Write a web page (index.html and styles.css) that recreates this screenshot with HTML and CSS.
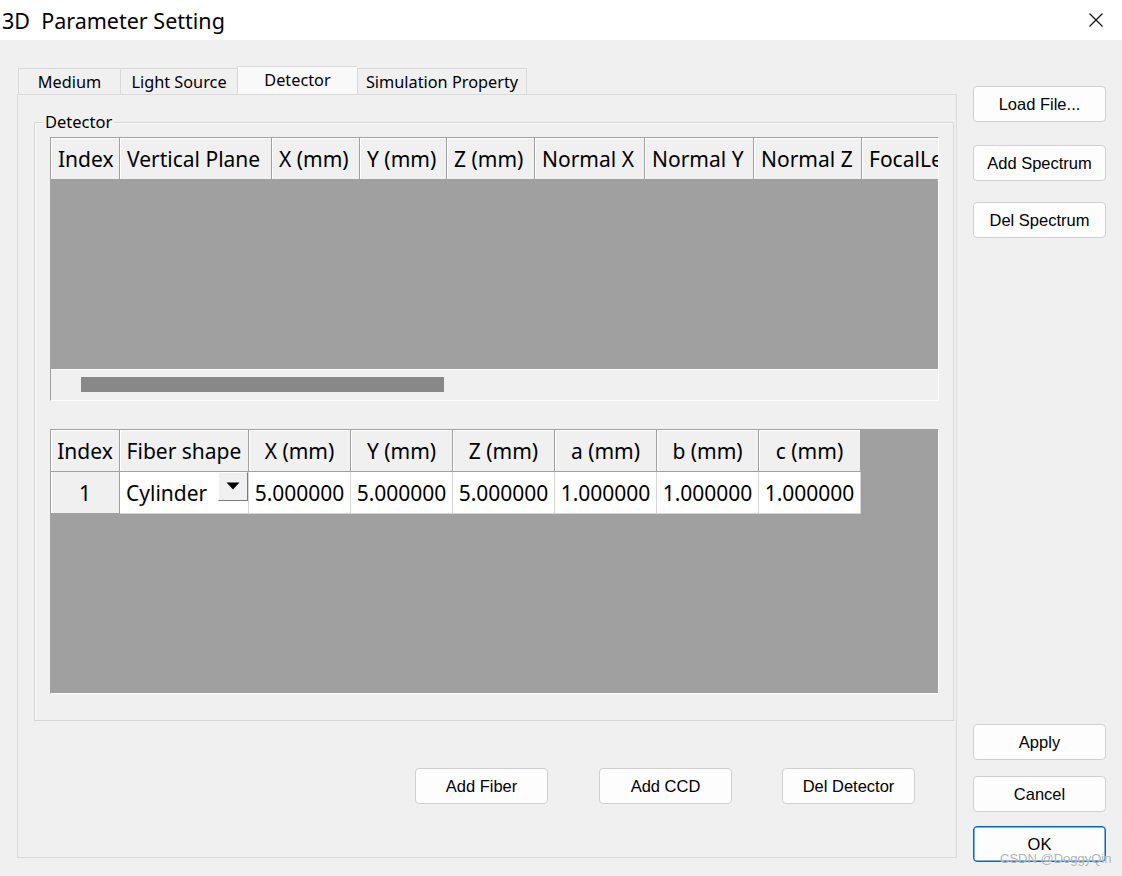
FILE: index.html
```html
<!DOCTYPE html>
<html>
<head>
<meta charset="utf-8">
<link rel="stylesheet" href="styles.css">
</head>
<body>
<div class="titlebar">
  <span class="title">3D&nbsp; Parameter Setting</span>
  <svg class="close" width="16" height="16" viewBox="0 0 16 16"><path d="M1.5 1.5 L14.5 14.5 M14.5 1.5 L1.5 14.5" stroke="#1a1a1a" stroke-width="1.3" fill="none"/></svg>
</div>
<div class="main">
  <div class="tabwidget">
    <div class="tabs">
      <div class="tab w-medium">Medium</div>
      <div class="tab w-light">Light Source</div>
      <div class="tab active w-det">Detector</div>
      <div class="tab w-sim">Simulation Property</div>
    </div>
    <div class="pane">
      <div class="group">
        <div class="group-title">Detector</div>
        <div class="grid grid1">
          <div class="hrow">
            <div class="hc l c-idx">Index</div>
            <div class="hc l c-vp">Vertical Plane</div>
            <div class="hc l c-x">X (mm)</div>
            <div class="hc l c-y">Y (mm)</div>
            <div class="hc l c-z">Z (mm)</div>
            <div class="hc l c-nx">Normal X</div>
            <div class="hc l c-ny">Normal Y</div>
            <div class="hc l c-nz">Normal Z</div>
            <div class="hc l c-fl">FocalLength</div>
          </div>
          <div class="gbody"></div>
          <div class="hscroll"><div class="handle"></div></div>
        </div>
        <div class="grid grid2">
          <div class="hrow">
            <div class="hc c-idx">Index</div>
            <div class="hc c-fs">Fiber shape</div>
            <div class="hc c-v">X (mm)</div>
            <div class="hc c-v">Y (mm)</div>
            <div class="hc c-v">Z (mm)</div>
            <div class="hc c-v">a (mm)</div>
            <div class="hc c-v">b (mm)</div>
            <div class="hc c-v">c (mm)</div>
          </div>
          <div class="drow">
            <div class="rh c-idx">1</div>
            <div class="dc c-fs combo"><span>Cylinder</span><span class="drop"><svg width="14" height="8" viewBox="0 0 14 8"><path d="M0.5 0.5 H13.5 L7 7.5 Z" fill="#000"/></svg></span></div>
            <div class="dc c-v">5.000000</div>
            <div class="dc c-v">5.000000</div>
            <div class="dc c-v">5.000000</div>
            <div class="dc c-v">1.000000</div>
            <div class="dc c-v">1.000000</div>
            <div class="dc c-v">1.000000</div>
          </div>
        </div>
      </div>
      <div class="actions">
        <button class="btn">Add Fiber</button>
        <button class="btn">Add CCD</button>
        <button class="btn">Del Detector</button>
      </div>
    </div>
  </div>
  <div class="side">
    <button class="btn">Load File...</button>
    <button class="btn s2">Add Spectrum</button>
    <button class="btn s3">Del Spectrum</button>
    <button class="btn s4">Apply</button>
    <button class="btn s5">Cancel</button>
    <button class="btn s6 default">OK</button>
  </div>
</div>
<div class="watermark">CSDN @DoggyQin</div>
</body>
</html>
```
FILE: styles.css
```css
* { box-sizing: border-box; margin: 0; padding: 0; }
html, body { width: 1122px; height: 876px; overflow: hidden; }
body {
  background: #f0f0f0;
  font-family: "Noto Sans", "Open Sans", sans-serif;
  color: #000;
  position: relative;
}
.titlebar {
  height: 40px;
  background: #fff;
  display: flex;
  align-items: center;
  justify-content: space-between;
}
.title { font-size: 21.5px; padding-left: 2px; }
.close { margin-right: 18px; margin-top: -1px; }

.main { display: flex; height: 836px; }

.tabwidget {
  margin-left: 17px;
  margin-top: 26px;
  width: 940px;
  display: flex;
  flex-direction: column;
}
.tabs { display: flex; align-items: flex-end; height: 28px; padding-left: 1px; }
.tab {
  height: 26px;
  border: 1px solid #dadada;
  border-bottom: none;
  border-right: none;
  font-size: 16.3px;
  display: flex;
  align-items: center;
  justify-content: center;
  background: #f0f0f0;
}
.tab:last-child { border-right: 1px solid #dadada; }
.tab.active { height: 28px; background: #f9f9f9; padding-bottom: 2px; }
.w-medium { width: 102px; }
.w-light { width: 117px; }
.w-det { width: 120px; }
.w-sim { width: 170px; }

.pane {
  height: 764px;
  border: 1px solid #dadada;
  background: #f0f0f0;
  display: flex;
  flex-direction: column;
}
.group {
  position: relative;
  margin-left: 16px;
  margin-top: 27px;
  width: 920px;
  height: 599px;
  border: 1px solid #d6d6d6;
  box-shadow: inset 1px 1px 0 #fbfbfb;
  padding: 14px 0 0 15px;
}
.group-title {
  position: absolute;
  top: -11px;
  left: 8px;
  padding: 0 2px;
  font-size: 16.5px;
  line-height: 20px;
  background: #f0f0f0;
}

.grid {
  width: 889px;
  border-top: 1px solid #a0a0a0;
  border-left: 1px solid #a0a0a0;
  border-right: 1px solid #fdfdfd;
  border-bottom: 1px solid #fdfdfd;
  background: #a0a0a0;
  display: flex;
  flex-direction: column;
  overflow: hidden;
}
.grid1 { height: 264px; }
.grid2 { height: 265px; margin-top: 28px; }

.hrow { display: flex; height: 42px; flex-shrink: 0; }
.hc {
  flex-shrink: 0;
  height: 42px;
  background: #f0f0f0;
  border-right: 1px solid #a0a0a0;
  border-bottom: 1px solid #a0a0a0;
  box-shadow: inset 1px 1px 0 #fff;
  font-size: 21px;
  line-height: 43px;
  white-space: nowrap;
  overflow: hidden;
  text-align: center;
}
.hc.l { text-align: left; padding-left: 7px; }
.grid1 .c-idx { width: 69px; }
.c-vp { width: 152px; }
.c-x { width: 88px; }
.c-y { width: 87px; }
.c-z { width: 88px; }
.c-nx { width: 110px; }
.c-ny { width: 109px; }
.c-nz { width: 108px; }
.c-fl { width: 140px; border-right: none; }

.gbody { flex: 1; background: #a0a0a0; }
.hscroll {
  height: 31px;
  flex-shrink: 0;
  background: #f0f0f0;
  border-top: 1px solid #fafafa;
  padding: 7px 0 0 30px;
}
.handle { width: 363px; height: 15px; background: #888; }

.grid2 .c-idx { width: 69px; }
.c-fs { width: 129px; }
.c-v { width: 102px; }
.drow { display: flex; height: 42px; flex-shrink: 0; }
.rh {
  flex-shrink: 0;
  background: #f0f0f0;
  border-right: 1px solid #a0a0a0;
  border-bottom: 1px solid #a0a0a0;
  box-shadow: inset 1px 0 0 #fff;
  font-size: 21px;
  line-height: 43px;
  text-align: center;
}
.dc {
  flex-shrink: 0;
  background: #fff;
  border-right: 1px solid #d4d4d4;
  border-bottom: 1px solid #d4d4d4;
  font-size: 21px;
  line-height: 43px;
  text-align: center;
  white-space: nowrap;
  overflow: hidden;
}
.combo {
  display: flex;
  justify-content: space-between;
  align-items: flex-start;
  text-align: left;
  padding-left: 6px;
}
.combo span:first-child { line-height: 43px; }
.drop {
  width: 30px;
  height: 29px;
  background: #f0f0f0;
  border-top: 1px solid #fff;
  border-left: 1px solid #fff;
  border-right: 1px solid #7a7a7a;
  border-bottom: 1px solid #7a7a7a;
  display: flex;
  justify-content: center;
  padding-top: 9px;
}

.btn {
  width: 133px;
  height: 36px;
  background: #fdfdfd;
  border: 1px solid #d0d0d0;
  border-radius: 4px;
  font-family: "Liberation Sans", Arial, sans-serif;
  font-size: 16.5px;
  color: #000;
  flex-shrink: 0;
}
.actions {
  display: flex;
  gap: 51px;
  margin-top: 47px;
  padding-left: 397px;
}
.actions .btn:nth-child(3) { margin-left: -1px; }

.side {
  margin-left: 16px;
  padding-top: 46px;
  display: flex;
  flex-direction: column;
}
.s2 { margin-top: 23px; }
.s3 { margin-top: 21px; }
.s4 { margin-top: 486px; }
.s5 { margin-top: 16px; }
.s6 { margin-top: 14px; }
.default { border: 1px solid #0067c0; box-shadow: inset 0 0 0 0.5px #0067c0; }

.watermark {
  position: absolute;
  left: 1000px;
  top: 851px;
  white-space: nowrap;
  font-family: "Liberation Sans", Arial, sans-serif;
  font-size: 13px;
  color: rgba(150, 150, 150, 0.75);
  text-shadow: 0 0 1px #fff;
}
```
